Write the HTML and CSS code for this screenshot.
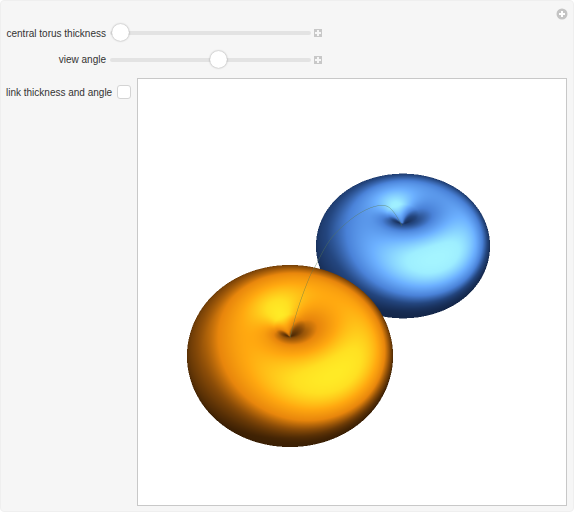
FILE: index.html
```html
<!DOCTYPE html>
<html lang="en">

<head>
    <meta charset="UTF-8">
    <title>Linked Tori</title>
    <link rel="stylesheet" href="styles.css">
</head>

<body>
    <div class="panel">
        <div class="top-bar">
            <svg class="panel-plus" width="12" height="12" viewBox="0 0 12 12">
                <circle cx="6" cy="6" r="5.5" fill="#c4c4c4"/>
                <path d="M6 3v6M3 6h6" stroke="#fff" stroke-width="2"/>
            </svg>
        </div>
        <div class="control-row">
            <span class="label">central torus thickness</span>
            <div class="slider"><div class="thumb thumb-low"></div></div>
            <span class="step-plus"></span>
        </div>
        <div class="control-row">
            <span class="label">view angle</span>
            <div class="slider"><div class="thumb thumb-mid"></div></div>
            <span class="step-plus"></span>
        </div>
        <div class="bottom-row">
            <div class="check-row">
                <span class="check-label">link thickness and angle</span>
                <span class="checkbox"></span>
            </div>
            <div class="plot">
                <canvas id="scene" class="scene" width="856" height="852"></canvas>
            </div>
        </div>
    </div>
    <script src="scene.js"></script>
</body>

</html>
```

FILE: styles.css
```css
html,
body {
    margin: 0;
    padding: 0;
    background-color: #ffffff;
}

.panel {
    box-sizing: border-box;
    width: 574px;
    height: 512px;
    padding: 0 5px 5px 5px;
    background-color: #f6f6f6;
    border: 1px solid #efefef;
    border-radius: 4px;
    font-family: "Liberation Sans", Arial, sans-serif;
    font-size: 10px;
    color: #333333;
}

.top-bar {
    display: flex;
    justify-content: flex-end;
    height: 19px;
    padding-top: 7px;
    box-sizing: border-box;
}

.panel-plus {
    display: block;
}

.control-row {
    display: flex;
    align-items: center;
    height: 26.5px;
}

.label {
    width: 100px;
    text-align: right;
    white-space: nowrap;
}

.slider {
    position: relative;
    width: 201px;
    height: 4px;
    margin-left: 4px;
    border-radius: 2px;
    background-color: #e3e3e3;
}

.thumb {
    position: absolute;
    top: -7px;
    width: 17px;
    height: 17px;
    border-radius: 50%;
    background-color: #ffffff;
    box-shadow: 0 0 2px rgba(0, 0, 0, 0.4);
}

.thumb-low {
    left: 2px;
}

.thumb-mid {
    left: 100px;
}

.step-plus {
    position: relative;
    width: 8px;
    height: 8px;
    margin-left: 3px;
    background-color: #c8c8c8;
}

.step-plus::before,
.step-plus::after {
    content: "";
    position: absolute;
    background-color: #f6f6f6;
}

.step-plus::before {
    left: 1px;
    top: 3px;
    width: 6px;
    height: 2px;
}

.step-plus::after {
    left: 3px;
    top: 1px;
    width: 2px;
    height: 6px;
}

.bottom-row {
    display: flex;
    align-items: flex-start;
    margin-top: 5px;
}

.check-row {
    display: flex;
    align-items: center;
    width: 131px;
    padding-top: 7px;
}

.check-label {
    width: 106px;
    white-space: nowrap;
}

.checkbox {
    box-sizing: border-box;
    width: 14px;
    height: 14px;
    margin-left: 5px;
    background-color: #ffffff;
    border: 1px solid #d4d4d4;
    border-radius: 3px;
}

.plot {
    box-sizing: border-box;
    width: 430px;
    height: 428px;
    background-color: #ffffff;
    border: 1px solid #c8c8c8;
}

.scene {
    display: block;
    width: 428px;
    height: 426px;
}
```

FILE: scene.js
```js
// Two apple-shaped tori, sphere traced into one canvas (2x, scaled down by css)
const canvas = document.getElementById('scene');
const ctx = canvas.getContext('2d');
const image = ctx.createImageData(canvas.width, canvas.height);
image.data.fill(255);

const ORIGIN_X = 138, ORIGIN_Y = 79, SCALE = 2;

function normalize(v) {
    const l = Math.hypot(v[0], v[1], v[2]);
    return [v[0] / l, v[1] / l, v[2] / l];
}

function dot(a, b) {
    return a[0] * b[0] + a[1] * b[1] + a[2] * b[2];
}

function hexToRgb(hex) {
    return [1, 3, 5].map(i => parseInt(hex.substr(i, 2), 16));
}

function rampColor(ramp, t) {
    t = Math.min(1, Math.max(0, t));
    for (let i = 1; i < ramp.length; i++) {
        if (t <= ramp[i][0]) {
            const k = (t - ramp[i - 1][0]) / (ramp[i][0] - ramp[i - 1][0]);
            const a = hexToRgb(ramp[i - 1][1]), b = hexToRgb(ramp[i][1]);
            return [a[0] + (b[0] - a[0]) * k, a[1] + (b[1] - a[1]) * k, a[2] + (b[2] - a[2]) * k];
        }
    }
    return hexToRgb(ramp[ramp.length - 1][1]);
}

function drawTorus(o) {
    const tilt = o.tilt * Math.PI / 180, roll = o.roll * Math.PI / 180;
    const axis = [Math.sin(tilt) * Math.sin(roll), Math.sin(tilt) * Math.cos(roll), Math.cos(tilt)];
    const outer = o.R + o.r;
    const w = canvas.width, h = canvas.height;
    const light = normalize(LIGHT.main), fill = normalize(LIGHT.fill);

    for (let py = 0; py < h; py++) {
        for (let px = 0; px < w; px++) {
            const x = (px + 0.5) / SCALE + ORIGIN_X - o.cx;
            const y = o.cy - ((py + 0.5) / SCALE + ORIGIN_Y);
            if (x * x + y * y > outer * outer) continue;

            let z = outer + 1, hit = false, ya = 0, rad = 0, p = null;
            for (let step = 0; step < 300 && z > -outer; step++) {
                p = [x, y, z];
                ya = dot(p, axis);
                rad = Math.sqrt(Math.max(1e-6, dot(p, p) - ya * ya));
                const d = Math.hypot(rad - o.R, ya) - o.r;
                if (d < 0.03) { hit = true; break; }
                z -= d;
            }
            if (!hit) continue;

            const radial = [(p[0] - axis[0] * ya) / rad, (p[1] - axis[1] * ya) / rad, (p[2] - axis[2] * ya) / rad];
            const n = normalize([
                radial[0] * (rad - o.R) + axis[0] * ya,
                radial[1] * (rad - o.R) + axis[1] * ya,
                radial[2] * (rad - o.R) + axis[2] * ya,
            ]);
            const main = Math.max(0, dot(n, light));
            const side = Math.max(0, (dot(n, fill) + 0.4) / 1.4);
            // darker close to the crease in the middle and at the outline
            const crease = Math.min(1, rad / o.creaseSize);
            const limb = Math.min(1, Math.max(0, n[2]) / 0.6);
            let level = LIGHT.ambient + LIGHT.mainGain * Math.pow(main, LIGHT.power) + LIGHT.fillGain * side;
            level *= (0.35 + 0.65 * crease) * (0.6 + 0.4 * limb);

            const c = rampColor(o.ramp, level);
            const i = (py * w + px) * 4;
            image.data[i] = c[0];
            image.data[i + 1] = c[1];
            image.data[i + 2] = c[2];
        }
    }
}

const LIGHT = {
    main: [0.33, 0.16, 0.93],
    fill: [-0.2, 0.8, 0.5],
    ambient: 0.05,
    mainGain: 0.76,
    fillGain: 0.2,
    power: 3.4,
};

drawTorus({
    cx: 403, cy: 246, R: 39.7, r: 47.3, tilt: 51, roll: 0, creaseSize: 16,
    ramp: [[0, '#10203f'], [0.2, '#24467f'], [0.38, '#4a82d8'], [0.6, '#6cb0ff'], [0.85, '#9eeeff'], [1, '#a8f8ff']],
});

drawTorus({
    cx: 290, cy: 356, R: 47.8, r: 55.2, tilt: 41.5, roll: 0, creaseSize: 16,
    ramp: [[0, '#2a1603'], [0.2, '#8a4c08'], [0.38, '#e8860c'], [0.6, '#ffa810'], [0.85, '#ffe022'], [1, '#fff028']],
});

ctx.putImageData(image, 0, 0);

// thin link between the two holes
const LINK = [[402, 226], [393, 208], [380, 204], [360, 212], [340, 228], [327, 243], [315, 267], [310, 275], [297, 310], [290, 338]];
ctx.scale(SCALE, SCALE);
ctx.translate(-ORIGIN_X, -ORIGIN_Y);
ctx.strokeStyle = 'rgba(90, 120, 80, 0.75)';
ctx.lineWidth = 0.5;
ctx.beginPath();
ctx.moveTo(LINK[0][0], LINK[0][1]);
for (let i = 1; i < LINK.length - 1; i++) {
    const mx = (LINK[i][0] + LINK[i + 1][0]) / 2, my = (LINK[i][1] + LINK[i + 1][1]) / 2;
    ctx.quadraticCurveTo(LINK[i][0], LINK[i][1], mx, my);
}
ctx.lineTo(290, 338);
ctx.stroke();
```
